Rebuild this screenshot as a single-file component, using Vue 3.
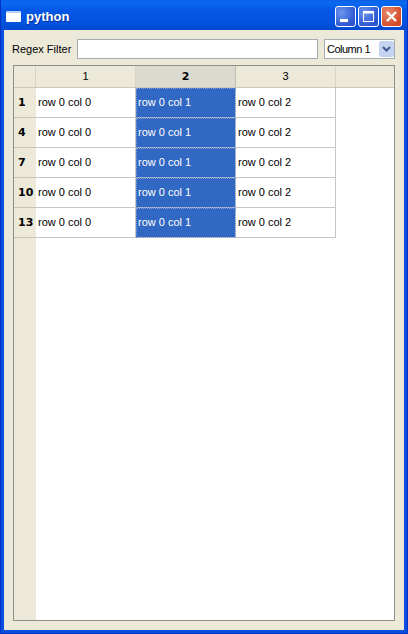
<script setup>
const cols = ['1', '2', '3']
const rows = ['1', '4', '7', '10', '13']
</script>

<template>
  <div class="window">
    <header class="titlebar">
      <span class="app-icon"></span>
      <span class="title">python</span>
      <div class="controls">
        <button class="ctl"><svg width="21" height="21" viewBox="0 0 21 21"><rect x="5" y="13" width="8" height="3" fill="#fff"/></svg></button>
        <button class="ctl"><svg width="21" height="21" viewBox="0 0 21 21"><rect x="5.5" y="5.5" width="10" height="10" fill="none" stroke="#fff"/><rect x="5" y="5" width="11" height="2.5" fill="#fff"/></svg></button>
        <button class="ctl close"><svg width="21" height="21" viewBox="0 0 21 21"><path d="M6 6l9 9M15 6l-9 9" stroke="#fff" stroke-width="2.4" fill="none"/></svg></button>
      </div>
    </header>
    <main class="client">
      <div class="filter">
        <label class="filter-label">Regex Filter</label>
        <input class="filter-input" type="text" />
        <div class="combo">
          <span class="combo-text">Column 1</span>
          <span class="combo-btn"><svg width="9" height="7" viewBox="0 0 9 7"><path d="M1 1l3.5 3.5L8 1" fill="none" stroke="#3f5a8c" stroke-width="2"/></svg></span>
        </div>
      </div>
      <div class="table">
        <div class="head-row">
          <div class="corner"></div>
          <div v-for="(c, i) in cols" :key="c" class="col-head" :class="{ active: i === 1 }">{{ c }}</div>
          <div class="col-rest"></div>
        </div>
        <div class="body">
          <div class="row-heads">
            <div v-for="r in rows" :key="r" class="row-head">{{ r }}</div>
          </div>
          <div class="cells">
            <div v-for="r in rows" :key="r" class="row">
              <div v-for="(c, i) in cols" :key="c" class="cell" :class="{ selected: i === 1 }">row 0 col {{ i }}</div>
            </div>
          </div>
        </div>
      </div>
    </main>
  </div>
</template>

<style scoped>
.window {
  width: 408px;
  height: 634px;
  box-sizing: border-box;
  display: flex;
  flex-direction: column;
  background: #0a4fe0;
  border-left: 1px solid #0032c8;
  border-right: 1px solid #0032c8;
  border-bottom: 1px solid #0032c8;
  padding: 0 3px 3px;
  font-family: "Liberation Sans", Arial, sans-serif;
  font-size: 11px;
  color: #000;
  overflow: hidden;
}
.titlebar {
  height: 30px;
  flex: none;
  margin: 0 -4px;
  padding: 3px 6px 0 6px;
  box-sizing: border-box;
  display: flex;
  align-items: center;
  background: linear-gradient(#0a5fe8 0, #0a6af0 10%, #0456e6 35%, #0353de 75%, #0449d0 100%);
}
.app-icon {
  width: 15px;
  height: 11px;
  background: #fff;
  border-top: 2px solid #b9d2f5;
  box-sizing: border-box;
  border-radius: 1px;
}
.title {
  margin-left: 5px;
  color: #fff;
  font-size: 13px;
  font-weight: 700;
  text-shadow: 1px 1px 0 #0a2f9a;
}
.controls {
  margin-left: auto;
  display: flex;
  gap: 2px;
}
.ctl {
  width: 21px;
  height: 21px;
  padding: 0;
  border: 1px solid #fff;
  border-radius: 3px;
  background: radial-gradient(circle at 30% 30%, #6d96ee, #2a55cf 75%);
  display: block;
}
.ctl svg { display: block; margin: -1px; }
.close {
  background: radial-gradient(circle at 30% 30%, #e98a6c, #d24a26 75%);
}
.client {
  flex: 1;
  display: flex;
  flex-direction: column;
  background: #ece9d8;
  border-right: 1px solid #f3e3d3;
  border-bottom: 1px solid #f3e3d3;
  padding: 9px 8px 8px 9px;
  min-height: 0;
}
.filter {
  display: flex;
  align-items: center;
  height: 20px;
  flex: none;
}
.filter-label {
  margin-left: -1px;
  width: 65px;
  flex: none;
}
.filter-input {
  width: 241px;
  height: 20px;
  box-sizing: border-box;
  border: 1px solid #a5acb2;
  background: #fff;
  padding: 0;
  flex: none;
}
.combo {
  width: 71px;
  height: 20px;
  margin-left: 6px;
  box-sizing: border-box;
  border: 1px solid #a5acb2;
  background: #fff;
  display: flex;
  align-items: center;
  flex: none;
  padding-left: 2px;
}
.combo-text { flex: 1; letter-spacing: -0.5px; }
.combo-btn {
  width: 15px;
  height: 16px;
  background: #c3d3f0;
  border-radius: 2px;
  display: flex;
  align-items: center;
  justify-content: center;
}
.table {
  flex: 1;
  margin-top: 6px;
  width: 382px;
  box-sizing: border-box;
  border: 1px solid #8f9088;
  background: #fff;
  display: flex;
  flex-direction: column;
  min-height: 0;
}
.head-row {
  display: flex;
  height: 22px;
  flex: none;
  background: #ece9d8;
  border-bottom: 1px solid #c9c7ba;
  box-sizing: border-box;
}
.corner {
  width: 22px;
  flex: none;
  border-right: 1px solid #d6d3c2;
  box-sizing: border-box;
}
.col-head {
  width: 100px;
  flex: none;
  box-sizing: border-box;
  text-align: center;
  line-height: 21px;
  border-right: 1px solid #d6d3c2;
}
.col-head.active {
  background: #dcdad0;
  font-weight: 700;
  font-family: "DejaVu Sans", sans-serif;
  border-right-color: #bfbdb0;
}
.col-rest { flex: 1; }
.body {
  flex: 1;
  display: flex;
  min-height: 0;
}
.row-heads {
  width: 22px;
  flex: none;
  background: #ece9d8;
}
.row-head {
  height: 30px;
  box-sizing: border-box;
  border-bottom: 1px solid #c6c4b8;
  font-family: "DejaVu Sans", sans-serif;
  font-weight: 700;
  font-size: 11px;
  line-height: 29px;
  padding-left: 4px;
}
.cells {
  flex: 1;
  min-width: 0;
}
.row {
  display: flex;
  height: 30px;
}
.cell {
  width: 100px;
  flex: none;
  box-sizing: border-box;
  border-right: 1px solid #c6c6c6;
  border-bottom: 1px solid #c6c6c6;
  line-height: 29px;
  padding-left: 2px;
  white-space: nowrap;
}
.cell.selected {
  background: #3168c4;
  color: #fff;
  outline: 1px dotted #7f9bd0;
  outline-offset: -1px;
}
</style>

<style>
html, body { margin: 0; }
</style>
